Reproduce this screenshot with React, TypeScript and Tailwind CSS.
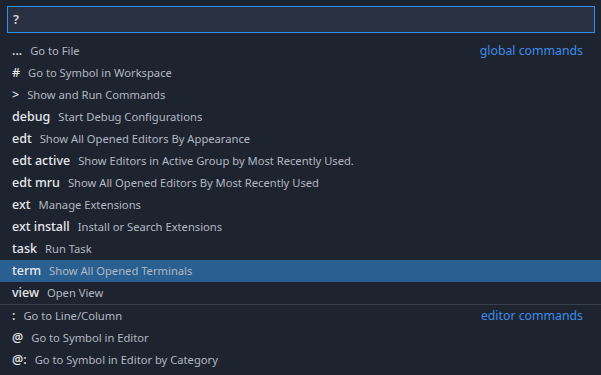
import React from 'react';

type Item = {
  label: string;
  desc: string;
  group?: string;
  selected?: boolean;
  separator?: boolean;
};

const items: Item[] = [
  { label: '...', desc: 'Go to File', group: 'global commands' },
  { label: '#', desc: 'Go to Symbol in Workspace' },
  { label: '>', desc: 'Show and Run Commands' },
  { label: 'debug', desc: 'Start Debug Configurations' },
  { label: 'edt', desc: 'Show All Opened Editors By Appearance' },
  { label: 'edt active', desc: 'Show Editors in Active Group by Most Recently Used.' },
  { label: 'edt mru', desc: 'Show All Opened Editors By Most Recently Used' },
  { label: 'ext', desc: 'Manage Extensions' },
  { label: 'ext install', desc: 'Install or Search Extensions' },
  { label: 'task', desc: 'Run Task' },
  { label: 'term', desc: 'Show All Opened Terminals', selected: true },
  { label: 'view', desc: 'Open View' },
  { label: ':', desc: 'Go to Line/Column', group: 'editor commands', separator: true },
  { label: '@', desc: 'Go to Symbol in Editor' },
  { label: '@:', desc: 'Go to Symbol in Editor by Category' },
];

export default function App() {
  return (
    <div
      className="w-[601px] h-[375px] bg-[#1e2330] overflow-hidden flex flex-col"
      style={{ fontFamily: '"Noto Sans", "Open Sans", sans-serif' }}
    >
      {/* Input */}
      <div className="pt-[6px] pl-[7px] pr-[6px] pb-[7px]">
        <div className="h-[27px] bg-[#283041] border border-[#2f8ff0] flex items-center px-[5px] text-[13px] font-semibold text-[#d6d9de]">
          ?
        </div>
      </div>

      {/* List */}
      <div className="flex flex-col">
        {items.map((it, i) => (
          <div
            key={i}
            className={`flex items-center pl-[12px] pr-[18px] ${
              it.selected ? 'bg-[#2a5f91]' : ''
            } ${it.separator ? 'h-[23px] border-t border-[#3a3f4c]' : 'h-[22px]'}`}
          >
            <span className="text-[12.5px] font-medium text-[#e6e8ec] whitespace-nowrap leading-none">
              {it.label}
            </span>
            <span className="ml-[8px] text-[11.2px] text-[#b3b8c1] whitespace-nowrap leading-none">
              {it.desc}
            </span>
            {it.group && (
              <span className="ml-auto text-[12.3px] text-[#3b8eea] whitespace-nowrap leading-none">
                {it.group}
              </span>
            )}
          </div>
        ))}
      </div>
    </div>
  );
}
